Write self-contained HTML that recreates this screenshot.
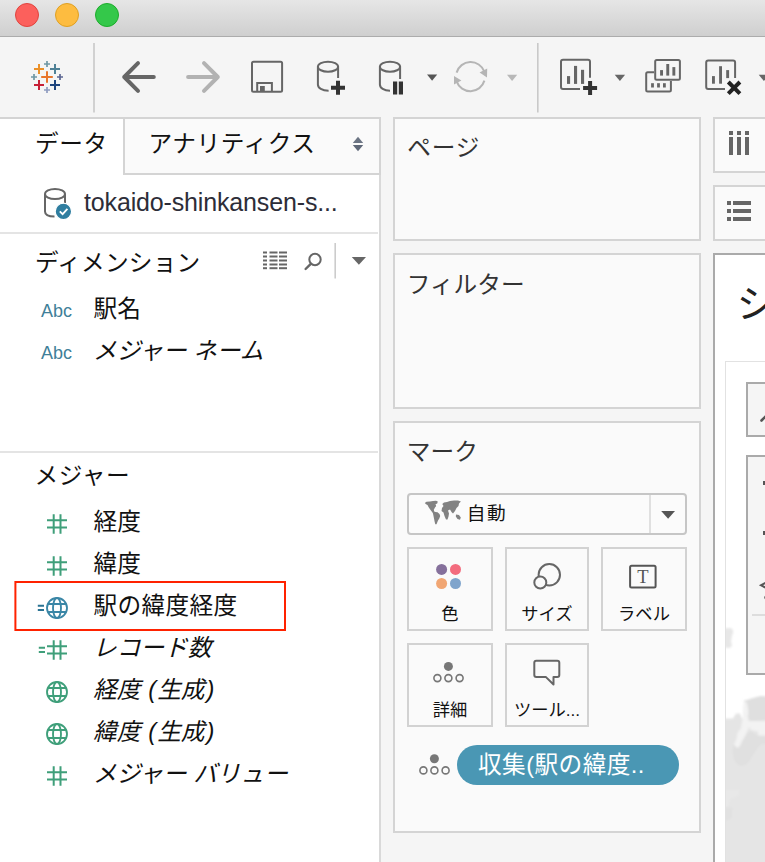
<!DOCTYPE html>
<html lang="ja">
<head>
<meta charset="utf-8">
<title>Tableau</title>
<style>
*{box-sizing:border-box;margin:0;padding:0}
html,body{width:765px;height:862px;overflow:hidden;background:#f5f5f5}
body{position:relative;font-family:"Liberation Sans","Noto Sans CJK JP",sans-serif;color:#1a1a1a}
.abs{position:absolute}
#titlebar{left:0;top:0;width:765px;height:37px;background:linear-gradient(#e6e6e6,#cfcfcf);border-bottom:1px solid #acacac}
.tl{position:absolute;top:3px;width:24px;height:24px;border-radius:50%}
#left{left:0;top:117px;width:381px;height:745px;background:#fff;border-top:2px solid #d4d4d4;border-right:2px solid #d9d9d9}
#tab2{left:123px;top:117px;width:258px;height:58px;background:#fafafa;border:2px solid #d4d4d4}
.hr{position:absolute;left:0;width:378px;height:2px;background:#e4e4e4}
.t{position:absolute;white-space:nowrap;line-height:30px;height:30px;font-size:23.7px;color:#111}
.i{font-style:italic}
.p1{margin:0 1.1px 0 1.2px}.p2{margin-left:2px}
.card{position:absolute;background:#fafafa;border:2px solid #d4d4d4}
.h{color:#333}
.btn{position:absolute;background:#fafafa;border:2px solid #d2d2d2}
.bl{position:absolute;white-space:nowrap;font-size:17.3px;line-height:24px;height:24px;color:#111;text-align:center}
#icons{position:absolute;left:0;top:0;width:765px;height:862px;pointer-events:none}
</style>
</head>
<body>
<div id="titlebar" class="abs">
  <div class="tl" style="left:15px;background:#fc605c;border:1px solid #e0443e"></div>
  <div class="tl" style="left:55px;background:#fdbc40;border:1px solid #dfa023"></div>
  <div class="tl" style="left:95px;background:#34c84a;border:1px solid #1dad2b"></div>
</div>

<!-- left data pane -->
<div id="left" class="abs"></div>
<div id="tab2" class="abs"></div>
<div class="t" style="left:35px;top:129px;letter-spacing:.5px">データ</div>
<div class="t" style="left:148.5px;top:129px;letter-spacing:.55px">アナリティクス</div>
<div class="t" style="left:84px;top:186.500px;color:#2d2d38;font-size:25px;letter-spacing:-0.15px">tokaido-shinkansen-s...</div>
<div class="hr" style="top:232px"></div>
<div class="t" style="left:35px;top:247.5px;letter-spacing:.17px">ディメンション</div>
<div class="t" style="left:41px;top:296px;font-size:18px;color:#3f7f99">Abc</div>
<div class="t" style="left:93.5px;top:294px">駅名</div>
<div class="t" style="left:41px;top:338px;font-size:18px;color:#3f7f99">Abc</div>
<div class="t i" style="left:93px;top:336px">メジャー ネーム</div>
<div class="hr" style="top:451px"></div>
<div class="t" style="left:34.5px;top:461px;letter-spacing:.5px">メジャー</div>
<div class="t" style="left:93.5px;top:507px">経度</div>
<div class="t" style="left:93.5px;top:549px">緯度</div>
<svg class="abs" style="left:0;top:570px" width="300" height="70" viewBox="0 570 300 70"><rect x="15.400" y="582" width="269.600" height="48" fill="none" stroke="#ff2200" stroke-width="2"/></svg>
<div class="t" style="left:93.500px;top:591px;letter-spacing:.3px">駅の緯度経度</div>
<div class="t i" style="left:93px;top:633px">レコード数</div>
<div class="t i" style="left:93px;top:675px">経度 <span class="p1">(</span>生成<span class="p2">)</span></div>
<div class="t i" style="left:93px;top:717px">緯度 <span class="p1">(</span>生成<span class="p2">)</span></div>
<div class="t i" style="left:93px;top:759px">メジャー バリュー</div>

<!-- middle cards -->
<div class="card" style="left:393px;top:117px;width:308px;height:124px"></div>
<div class="t h" style="left:407.3px;top:133px;letter-spacing:.8px">ページ</div>
<div class="card" style="left:393px;top:253px;width:308px;height:156px"></div>
<div class="t h" style="left:406.7px;top:270px">フィルター</div>
<div class="card" style="left:393px;top:421px;width:308px;height:412px"></div>
<div class="t h" style="left:406.8px;top:437px">マーク</div>
<div class="abs" style="left:407px;top:493px;width:280px;height:41.500px;border:2px solid #c6c6c6;border-radius:4px;background:#fbfbfb"></div>
<div class="abs" style="left:649px;top:495px;width:2px;height:38px;background:#e0e0e0"></div>
<div class="t" style="left:466.800px;top:499px;font-size:18.700px;letter-spacing:1.500px">自動</div>

<div class="btn" style="left:407px;top:547px;width:86px;height:84px"></div>
<div class="btn" style="left:505px;top:547px;width:84px;height:84px"></div>
<div class="btn" style="left:601px;top:547px;width:86px;height:84px"></div>
<div class="btn" style="left:407px;top:643px;width:86px;height:84px"></div>
<div class="btn" style="left:505px;top:643px;width:84px;height:84px"></div>
<div class="bl" style="left:407px;width:86px;top:602px">色</div>
<div class="bl" style="left:505px;width:84px;top:602px">サイズ</div>
<div class="bl" style="left:601px;width:86px;top:602px">ラベル</div>
<div class="bl" style="left:407px;width:86px;top:698px">詳細</div>
<div class="bl" style="left:505px;width:84px;top:698px">ツール...</div>

<div class="abs" style="left:456.5px;top:745px;width:222.5px;height:40px;border-radius:20px;background:#4a97b4"></div>
<div class="t" style="left:478px;top:750px;color:#fff;letter-spacing:.4px">収集(駅の緯度..</div>

<!-- right shelves / view -->
<div class="card" style="left:713px;top:117px;width:60px;height:56px"></div>
<div class="card" style="left:713px;top:185px;width:60px;height:56px"></div>
<div class="abs" style="left:713px;top:253px;width:60px;height:620px;background:#fff;border:2px solid #aaa"></div>
<div class="t" style="left:736.5px;top:283px;font-size:39px;line-height:44px;height:44px;color:#222">シート 1</div>
<div class="abs" style="left:725px;top:361px;width:50px;height:510px;background:#fff;border:1px solid #e2e2e2"></div>
<svg class="abs" style="left:726px;top:362px" width="39" height="500" viewBox="726 362 39 500">
<defs><filter id="bl" filterUnits="userSpaceOnUse" x="700" y="600" width="120" height="300"><feGaussianBlur stdDeviation="1.1"/></filter></defs>
<g filter="url(#bl)">
<path d="M720 628.500L731 628L733.500 631L732 636L731 641L732 646L729.500 648L720 647Z" fill="#e7e7e7"/>
<path d="M720 718.500H733L736 713.400H740L741.500 717.500L743 719L744 700H790V890H720Z" fill="#e5e5e5"/>
<path d="M746.700 700.100L753 698L760.600 696L790 697.500V721L757 721.500L749 722.500L748 719L749 714L746 711L745 705Z" fill="#dfdfdf"/>
<path d="M733 745L732.500 752L734 760L737 764L741 766.500L747.500 764L752 757L757 749L761 744.500L790 741V736H758L751 731L747 733L742 742L738 748Z" fill="#e0e0e0"/>
<path d="M744.500 701L747 703L748.500 712L747.500 716L749 721L757 721L790 720.500V735.500H758.500L758 731.500L751 730L749 727L747 732L745 736L742 741L740 746L737.500 748L734 744.500L736.500 739L737.500 733L741 728L742 722L743.500 714L743.500 706Z" fill="#f3f3f3"/>
<path d="M720 790H739V795L730 799L728 807H720Z" fill="#e8e8e8"/>
<path d="M720 807H732.500L732 818L728 820.500H720Z" fill="#e1e1e1"/>
</g>
</svg>
<div class="abs" style="left:745.5px;top:381.5px;width:30px;height:55px;background:#f5f5f5;border:2px solid #aaa"></div>
<div class="abs" style="left:745.5px;top:455px;width:30px;height:219.500px;background:#f5f5f5;border:2px solid #aaa"></div>
<div class="abs" style="left:752px;top:614.300px;width:20px;height:1.700px;background:#ddd"></div>
<svg class="abs" style="left:747px;top:383px" width="18" height="290" viewBox="747 383 18 290">
<path d="M761.5 420.500L767 415" stroke="#555" stroke-width="2.600" stroke-linecap="round" fill="none"/>
<rect x="763" y="481" width="10" height="4" fill="#555"/>
<rect x="763" y="531" width="10" height="4" fill="#555"/>
<path d="M768 581.500L761 585.200L768 589" stroke="#555" stroke-width="2" fill="none"/>
<circle cx="766.500" cy="597.500" r="2.200" fill="#555"/>
</svg>

<svg id="icons" viewBox="0 0 765 862">
<!-- toolbar separators -->
<rect x="93.2" y="43" width="1.6" height="69.5" fill="#c9c9c9"/>
<rect x="537" y="43" width="1.6" height="69.5" fill="#c9c9c9"/>
<!-- tableau logo -->
<g fill="none" stroke-width="2">
<path d="M41.2 77H52.8M47 71.2V82.8" stroke="#e8762c"/>
<path d="M34 69H44M39 64V74" stroke="#eb9129"/>
<path d="M50 69H60M55 64V74" stroke="#4f8196"/>
<path d="M34 85H44M39 80V90" stroke="#c72037"/>
<path d="M50 85H60M55 80V90" stroke="#1f457e"/>
<g stroke-width="1.7">
<path d="M44 64H50M47 61V67" stroke="#6f98a5"/>
<path d="M31 77H37M34 74V80" stroke="#6f98a5"/>
<path d="M57 77H63M60 74V80" stroke="#5b6591"/>
<path d="M44 90H50M47 87V93" stroke="#8f9cc0"/>
</g>
</g>
<!-- back / forward -->
<g fill="none" stroke-width="4" stroke-linecap="round" stroke-linejoin="round">
<path d="M153.8 77H124.2M138 63.2L124.2 77L138 90.8" stroke="#666"/>
<path d="M188.1 77H217.8M204 63.2L217.8 77L204 90.8" stroke="#b2b2b2"/>
</g>
<!-- save -->
<g fill="none" stroke="#666" stroke-width="2">
<rect x="252" y="61.7" width="30.1" height="30.1" rx="1.5"/>
<path d="M257.2 91.5V83H271.9V91.5"/>
<rect x="260" y="86" width="4.8" height="5.5" fill="#666" stroke="none"/>
</g>
<!-- add datasource -->
<g fill="none" stroke="#666" stroke-width="2">
<ellipse cx="328" cy="66.7" rx="10.1" ry="5"/>
<path d="M317.9 66.7V84.5C317.9 88 322 90.7 328.6 90.7M338.1 66.7V78"/>
</g>
<path d="M331 87.7H345M338 80.7V94.7" stroke="#333" stroke-width="4" fill="none"/>
<!-- pause datasource -->
<g fill="none" stroke="#666" stroke-width="2">
<ellipse cx="390" cy="66.7" rx="10.1" ry="5"/>
<path d="M379.9 66.7V84.5C379.9 88 384 90.7 390 90.7M400.1 66.7V79"/>
</g>
<rect x="393" y="81.5" width="4.2" height="13" fill="#333"/>
<rect x="398.8" y="81.5" width="4.2" height="13" fill="#333"/>
<path d="M427 74.5H437.2L432.1 80.8Z" fill="#555"/>
<!-- refresh -->
<g fill="none" stroke="#b5b5b5" stroke-width="2">
<path d="M456.6 72.6A14.6 14.6 0 0 1 484.3 71.5"/>
<path d="M484.4 80.6A14.6 14.6 0 0 1 456.6 81.4"/>
</g>
<path d="M479.6 72.6L487.2 68.6L487 77.4Z" fill="#b5b5b5"/>
<path d="M461.4 80.6L454 76L454 84.4Z" fill="#b5b5b5"/>
<path d="M507 74.8H517.2L512.1 80.9Z" fill="#b8b8b8"/>
<!-- new worksheet -->
<g fill="none" stroke="#666" stroke-width="2">
<path d="M580 89.1H563A2 2 0 0 1 561 87.1V61.7A2 2 0 0 1 563 59.7H588A2 2 0 0 1 590 61.7V77.7"/>
</g>
<g fill="#666">
<rect x="567" y="76.1" width="3.1" height="7.8"/>
<rect x="574" y="65.9" width="3.1" height="18"/>
<rect x="581" y="69.8" width="3.1" height="14.1"/>
</g>
<path d="M583.1 87.9H597.1M590.1 80.9V94.9" stroke="#333" stroke-width="4" fill="none"/>
<path d="M614.7 74.8H625.1L619.9 81Z" fill="#666"/>
<!-- duplicate -->
<g fill="none" stroke="#666" stroke-width="2">
<rect x="655.2" y="59.9" width="24.7" height="19.8" rx="1.5"/>
<path d="M654 72.3H647.7A1.5 1.5 0 0 0 646.2 73.8V90.1A1.5 1.5 0 0 0 647.7 91.6H669.4A1.5 1.5 0 0 0 670.9 90.1V81"/>
</g>
<g fill="#666">
<rect x="660.1" y="70.1" width="2.9" height="5.5"/>
<rect x="666.3" y="64" width="2.9" height="11.6"/>
<rect x="672.4" y="67.1" width="2.9" height="8.5"/>
<rect x="651.1" y="83.2" width="2.8" height="4.3"/>
<rect x="657.1" y="83.2" width="2.8" height="4.3"/>
<rect x="663" y="83.2" width="2.8" height="4.3"/>
</g>
<!-- clear -->
<g fill="none" stroke="#666" stroke-width="2">
<path d="M725 89H708.2A2 2 0 0 1 706.2 87V62.4A2 2 0 0 1 708.2 60.4H733.1A2 2 0 0 1 735.1 62.4V78"/>
</g>
<g fill="#666">
<rect x="712" y="76.1" width="2.9" height="7.6"/>
<rect x="719.1" y="66.2" width="2.9" height="17.5"/>
<rect x="726.2" y="70.1" width="2.9" height="8"/>
</g>
<path d="M728.3 82L739.9 93.6M739.9 82L728.3 93.6" stroke="#222" stroke-width="4" fill="none"/>
<path d="M758.7 74.8H769L763.9 81Z" fill="#666"/>

<!-- tab sort arrows -->
<path d="M352.800 143H363.200L358 136.800Z" fill="#6b7483"/>
<path d="M352.800 145H363.200L358 151.200Z" fill="#5f6878"/>

<!-- data source icon -->
<g fill="none" stroke="#666" stroke-width="2">
<ellipse cx="55" cy="194" rx="10" ry="5"/>
<path d="M45 194V211.5C45 214.5 48.5 216.6 54.5 216.6M65 194V204"/>
</g>
<circle cx="63.4" cy="211.4" r="8.2" fill="#2f7ea0" stroke="#fff" stroke-width="1.2"/>
<path d="M59.8 211.4L62.6 214.2L67.4 208.8" fill="none" stroke="#fff" stroke-width="1.8"/>

<!-- dimension header icons -->
<g fill="#666">
<rect x="263" y="251.5" width="4" height="2"/><rect x="269.5" y="251.5" width="8" height="2"/><rect x="279" y="251.5" width="8" height="2"/>
<rect x="263" y="255.5" width="4" height="2"/><rect x="269.5" y="255.5" width="8" height="2"/><rect x="279" y="255.5" width="8" height="2"/>
<rect x="263" y="259.5" width="4" height="2"/><rect x="269.5" y="259.5" width="8" height="2"/><rect x="279" y="259.5" width="8" height="2"/>
<rect x="263" y="263.5" width="4" height="2"/><rect x="269.5" y="263.5" width="8" height="2"/><rect x="279" y="263.5" width="8" height="2"/>
<rect x="263" y="267.2" width="4" height="2"/><rect x="269.5" y="267.2" width="8" height="2"/><rect x="279" y="267.2" width="8" height="2"/>
</g>
<circle cx="315" cy="259.5" r="5.7" fill="none" stroke="#666" stroke-width="2"/>
<path d="M310.8 263.8L305.6 269" stroke="#666" stroke-width="2.4" stroke-linecap="round"/>
<rect x="334.4" y="243" width="1.6" height="35.5" fill="#ccc"/>
<path d="M351.8 257H366L358.9 264.8Z" fill="#666"/>

<!-- field icons -->
<defs>
<g id="hash"><path d="M-10 -3.7H10M-10 3.5H10M-3.3 -9.7V9.7M3.5 -9.7V9.7" fill="none" stroke-width="2"/></g>
<g id="globe" fill="none" stroke-width="1.850"><circle r="10"/><ellipse rx="4" ry="10"/><path d="M-9.3 -4H9.3M-9.3 4H9.3"/></g>
<g id="eq"><path d="M-19.2 -2.2H-13M-19.2 2H-13" fill="none" stroke-width="1.9"/></g>
</defs>
<use href="#hash" x="57" y="524" stroke="#3f9f7a"/>
<use href="#hash" x="57" y="566" stroke="#3f9f7a"/>
<use href="#globe" x="57" y="608" stroke="#3a86a6"/>
<use href="#eq" x="57" y="608" stroke="#2a7393"/>
<use href="#hash" x="57" y="650" stroke="#3f9f7a"/>
<use href="#eq" x="58" y="650" stroke="#3f9f7a"/>
<use href="#globe" x="57" y="692" stroke="#3f9f7a"/>
<use href="#globe" x="57" y="734" stroke="#3f9f7a"/>
<use href="#hash" x="57" y="776" stroke="#3f9f7a"/>

<!-- shelf icons -->
<g fill="#666">
<rect x="729" y="131" width="4" height="4"/><rect x="729" y="137" width="4" height="18"/>
<rect x="737" y="131" width="4" height="4"/><rect x="737" y="137" width="4" height="18"/>
<rect x="745" y="131" width="4" height="4"/><rect x="745" y="137" width="4" height="18"/>
<rect x="727" y="201" width="4" height="4"/><rect x="733" y="201" width="18" height="4"/>
<rect x="727" y="209" width="4" height="4"/><rect x="733" y="209" width="18" height="4"/>
<rect x="727" y="217" width="4" height="4"/><rect x="733" y="217" width="18" height="4"/>
</g>

<!-- marks dropdown -->
<path d="M661.2 511H675L668.1 518.7Z" fill="#555"/>
<g fill="#828282">
<path d="M424.800 503L426.500 501.800L430 501.500L433 501L436 500.800L437.800 501.500L437.200 503.500L435.500 504.200L436.200 506L435 507.500L433.800 509.800L434.200 511.500L435.500 512L437.500 512.300L439.500 514L440.200 516L439.300 518.500L438 520.500L437.200 522.500L436.500 524.300L435.300 524.200L434.600 521.500L433.900 518L433.300 515L432.800 513L431.500 511.300L430 509.300L428.500 507L427.500 505L426 504.300Z"/>
<path d="M442.300 504L444 502.500L447 502L450 501L454 500.500L458 500.500L460.900 501.500L459 503.500L458.500 506L456.500 508L455 511L453 513.500L451.500 512L450 509.500L448 510.500L449 513.500L448.500 516.500L447.500 519.500L446 519.500L444.500 516L443.500 512.500L441.500 511L442 508L443.500 506Z"/>
<path d="M456 514.500L459 515L460.800 517.500L460 519.800L457.500 519L455.800 516.500Z"/>
</g>
<!-- color dots -->
<circle cx="441.6" cy="569.4" r="5.5" fill="#85709b"/>
<circle cx="455.5" cy="569.4" r="5.5" fill="#f36c7e"/>
<circle cx="441.6" cy="583.5" r="5.5" fill="#f1a673"/>
<circle cx="455.5" cy="583.5" r="5.500" fill="#7fa4cc"/>
<!-- size -->
<circle cx="549.300" cy="574.800" r="10.700" fill="none" stroke="#666" stroke-width="2"/>
<circle cx="540.300" cy="582.500" r="6" fill="#fafafa" stroke="#666" stroke-width="2"/>
<!-- label -->
<rect x="630.1" y="565.8" width="25.500" height="21.800" rx="1.500" fill="none" stroke="#555" stroke-width="2"/>
<text x="643" y="583.2" font-family="Liberation Serif, serif" font-size="18.500" text-anchor="middle" fill="#555">T</text>
<!-- detail -->
<g id="detail">
<circle cx="448.4" cy="666.4" r="4.500" fill="#777"/>
<circle cx="437.4" cy="678.1" r="3.500" fill="none" stroke="#777" stroke-width="1.600"/>
<circle cx="448.4" cy="678.1" r="3.500" fill="none" stroke="#777" stroke-width="1.600"/>
<circle cx="459.6" cy="678.1" r="3.500" fill="none" stroke="#777" stroke-width="1.600"/>
</g>
<use href="#detail" x="-14" y="92.300"/>
<!-- tooltip -->
<path d="M536.300 660.800H557.300A2 2 0 0 1 559.300 662.800V675.100A2 2 0 0 1 557.300 677.100H553.500V684.500L546 677.100H536.300A2 2 0 0 1 534.300 675.100V662.800A2 2 0 0 1 536.300 660.800Z" fill="none" stroke="#666" stroke-width="2" stroke-linejoin="round"/>
</svg>
</body>
</html>
